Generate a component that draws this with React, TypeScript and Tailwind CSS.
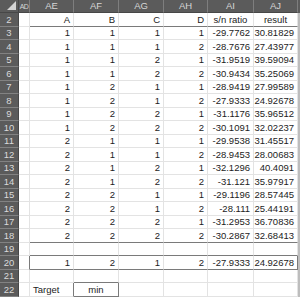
import React from "react";

const cols = ["AE", "AF", "AG", "AH", "AI", "AJ"];

type Row = (string | number)[];

const data: Row[] = [
  [1, 1, 1, 1, "-29.7762", "30.81829"],
  [1, 1, 1, 2, "-28.7676", "27.43977"],
  [1, 1, 2, 1, "-31.9519", "39.59094"],
  [1, 1, 2, 2, "-30.9434", "35.25069"],
  [1, 2, 1, 1, "-28.9419", "27.99589"],
  [1, 2, 1, 2, "-27.9333", "24.92678"],
  [1, 2, 2, 1, "-31.1176", "35.96512"],
  [1, 2, 2, 2, "-30.1091", "32.02237"],
  [2, 1, 1, 1, "-29.9538", "31.45517"],
  [2, 1, 1, 2, "-28.9453", "28.00683"],
  [2, 1, 2, 1, "-32.1296", "40.4091"],
  [2, 1, 2, 2, "-31.121", "35.97917"],
  [2, 2, 1, 1, "-29.1196", "28.57445"],
  [2, 2, 1, 2, "-28.111", "25.44191"],
  [2, 2, 2, 1, "-31.2953", "36.70836"],
  [2, 2, 2, 2, "-30.2867", "32.68413"],
];

const best: Row = [1, 2, 1, 2, "-27.9333", "24.92678"];

type CellProps = {
  children?: React.ReactNode;
  align?: "left" | "right" | "center";
  bottomDark?: boolean;
  rightDark?: boolean;
};

function Cell({ children, align = "right", bottomDark, rightDark }: CellProps) {
  const justify =
    align === "right" ? "justify-end pr-[3px]" : align === "center" ? "justify-center" : "justify-start pl-[3px]";
  return (
    <div
      className={`flex items-center overflow-hidden whitespace-nowrap border-r border-b ${justify} ${
        bottomDark ? "border-b-[#7a7a7a]" : "border-b-[#e3e3e3]"
      } ${rightDark ? "border-r-[#7a7a7a]" : "border-r-[#e3e3e3]"}`}
    >
      {children}
    </div>
  );
}

function RowHead({ n }: { n: number }) {
  return (
    <div className="flex items-center justify-center bg-[#5b5b5b] text-[#dadada] border-b border-r border-b-[#828282] border-r-[#474747]">
      {n}
    </div>
  );
}

function Edge() {
  return <div className="bg-[#bdbdbd]" />;
}

export default function App() {
  const rows: React.ReactNode[] = [];

  // row 2: column labels, underlined
  rows.push(
    <React.Fragment key="r2">
      <RowHead n={2} />
      <Cell />
      <Cell bottomDark>A</Cell>
      <Cell bottomDark>B</Cell>
      <Cell bottomDark>C</Cell>
      <Cell bottomDark>D</Cell>
      <Cell bottomDark align="center">s/n ratio</Cell>
      <Cell bottomDark align="center">result</Cell>
      <Edge />
    </React.Fragment>
  );

  data.forEach((r, i) => {
    const n = i + 3;
    const lastRow = n === 18;
    rows.push(
      <React.Fragment key={`r${n}`}>
        <RowHead n={n} />
        <Cell />
        {r.map((v, j) => (
          <Cell key={j} bottomDark={lastRow}>
            {v}
          </Cell>
        ))}
        <Edge />
      </React.Fragment>
    );
  });

  // row 19: blank, its lower edge is the top of the boxed result row
  rows.push(
    <React.Fragment key="r19">
      <RowHead n={19} />
      <Cell />
      {[0, 1, 2, 3, 4, 5].map((j) => (
        <Cell key={j} bottomDark />
      ))}
      <Edge />
    </React.Fragment>
  );

  // row 20: boxed best combination
  rows.push(
    <React.Fragment key="r20">
      <RowHead n={20} />
      <Cell rightDark />
      {best.map((v, j) => (
        <Cell key={j} bottomDark rightDark={j === 5}>
          {v}
        </Cell>
      ))}
      <Edge />
    </React.Fragment>
  );

  // row 21: blank, lower edge of AF frames the target box
  rows.push(
    <React.Fragment key="r21">
      <RowHead n={21} />
      <Cell />
      <Cell />
      <Cell bottomDark />
      <Cell />
      <Cell />
      <Cell />
      <Cell />
      <Edge />
    </React.Fragment>
  );

  // row 22: optimisation target
  rows.push(
    <React.Fragment key="r22">
      <RowHead n={22} />
      <Cell />
      <Cell align="left" rightDark>
        Target
      </Cell>
      <Cell align="center" bottomDark rightDark>
        min
      </Cell>
      <Cell />
      <Cell />
      <Cell />
      <Cell />
      <Edge />
    </React.Fragment>
  );

  return (
    <div
      className="w-[300px] h-[298px] overflow-hidden bg-white text-[#1c1c1c] text-[9.5px] leading-none"
      style={{ fontFamily: '"Liberation Sans", Arial, sans-serif' }}
    >
      <div className="grid grid-cols-[19px_11px_44px_45px_45px_44px_46px_44px_2px] grid-rows-[13px_repeat(21,13.5px)]">
        {/* corner selector */}
        <div className="relative bg-[#5b5b5b] border-r border-b border-r-[#474747] border-b-[#474747]">
          <svg className="absolute right-[2px] bottom-[2px]" width="9" height="9" viewBox="0 0 9 9">
            <polygon points="9,0 9,9 0,9" fill="#d4d4d4" />
          </svg>
        </div>
        {/* narrow column AD: label squeezed into its width */}
        <div className="flex items-center justify-center overflow-hidden whitespace-nowrap bg-[#5b5b5b] text-[#d6d6d6] text-[7px] tracking-[-0.5px] border-r border-b border-r-[#7e7e7e] border-b-[#474747]">
          AD
        </div>
        {cols.map((c) => (
          <div
            key={c}
            className="flex items-center justify-center overflow-hidden whitespace-nowrap bg-[#5b5b5b] text-[#d6d6d6] border-r border-b border-r-[#7e7e7e] border-b-[#474747]"
          >
            {c}
          </div>
        ))}
        <div className="bg-[#5b5b5b]" />
        {rows}
      </div>
    </div>
  );
}
